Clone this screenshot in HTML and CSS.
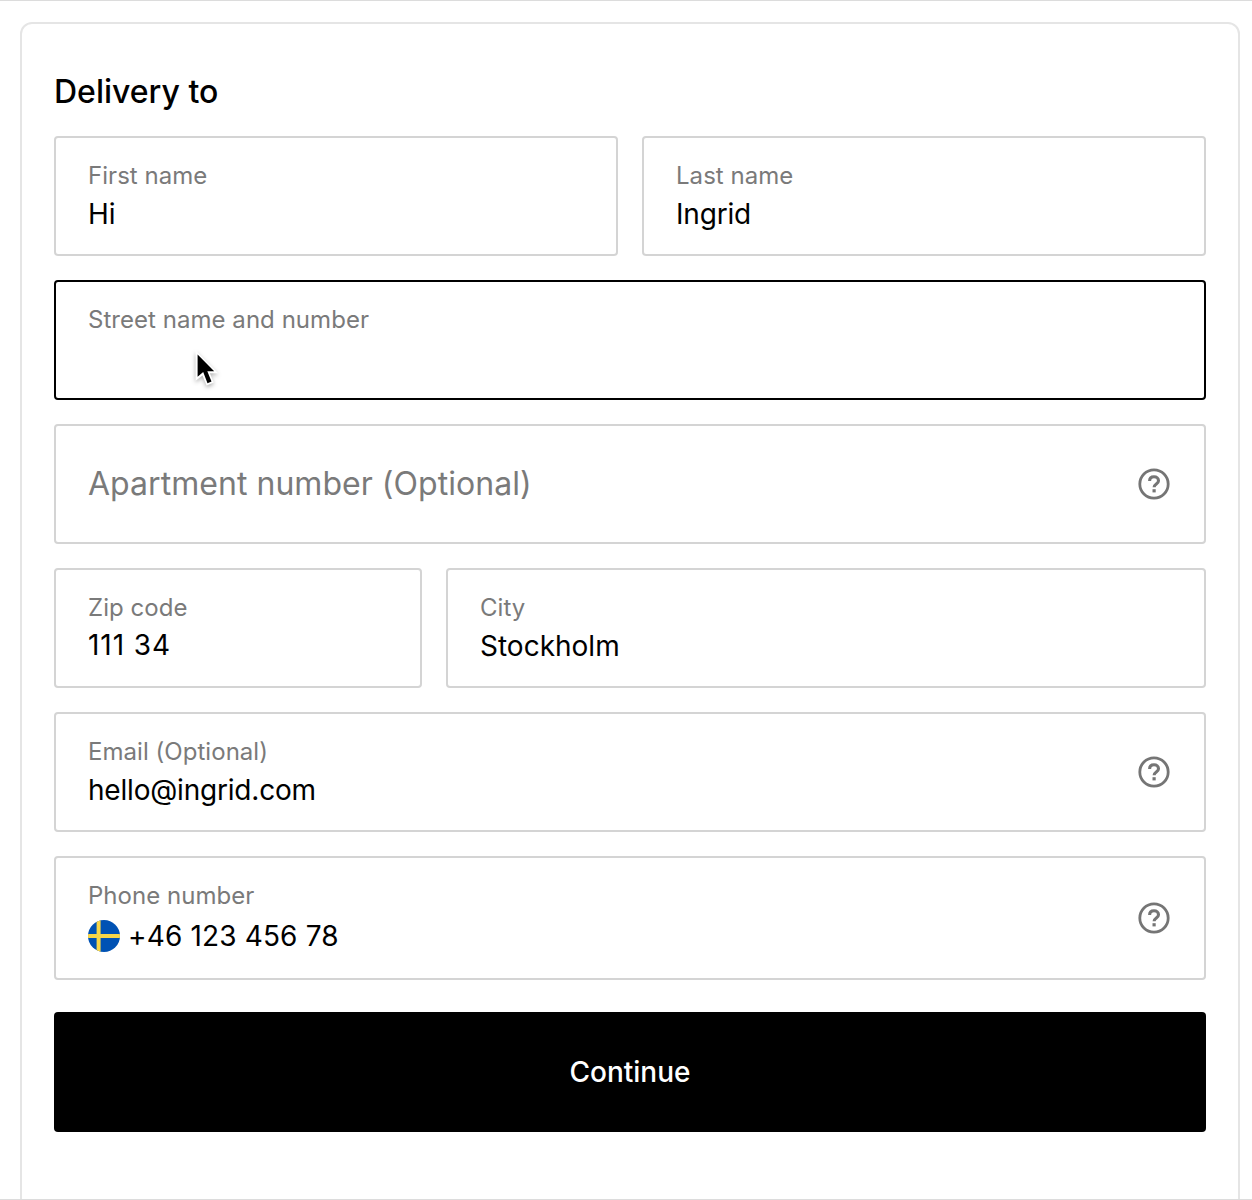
FILE: index.html
```html
<!DOCTYPE html>
<html lang="en">
<head>
  <meta charset="UTF-8">
  <title>Delivery to</title>
  <link rel="stylesheet" href="styles.css">
</head>
<body>

  <svg class="sprite" aria-hidden="true">
    <symbol id="icon-help" viewBox="0 0 32 32">
      <circle cx="16" cy="16" r="14.2" fill="none" stroke="currentColor" stroke-width="2.8"/>
      <path d="M11.6 13c0-2.7 1.8-4.3 4.4-4.3s4.5 1.6 4.5 4c0 3.3-4.4 3.2-4.4 6.6" fill="none" stroke="currentColor" stroke-width="3.1"/>
      <path d="M14.5 21.2h3.2v3.2h-3.2z" fill="currentColor"/>
    </symbol>
  </svg>

  <main class="page">
    <form class="card">
      <h1 class="title">Delivery to</h1>

      <div class="fields">
        <div class="row row-half">
          <label class="field">
            <span class="label">First name</span>
            <input class="value" type="text" value="Hi">
          </label>
          <label class="field">
            <span class="label">Last name</span>
            <input class="value value-tight" type="text" value="Ingrid">
          </label>
        </div>

        <label class="field active">
          <span class="label">Street name and number</span>
          <input class="value" type="text">
          <svg class="cursor" viewBox="0 0 28 40">
            <path d="M5.6 2.4v30.4l6.9-5.4 4.1 10.2 7.2-3.2-4-9.2h8.4z" fill="#fff"/>
            <path d="M7.6 6.6v22.2l5.6-4.8 4.3 11.2 4-1.8-4.2-10.2h6.9z" fill="#000"/>
          </svg>
        </label>

        <label class="field with-help">
          <span class="placeholder">Apartment number (Optional)</span>
          <svg class="help"><use href="#icon-help"/></svg>
        </label>

        <div class="row row-city">
          <label class="field">
            <span class="label">Zip code</span>
            <input class="value value-zip" type="text" value="111 34">
          </label>
          <label class="field">
            <span class="label">City</span>
            <input class="value" type="text" value="Stockholm">
          </label>
        </div>

        <label class="field with-help">
          <span class="stack">
            <span class="label">Email (Optional)</span>
            <input class="value value-tight" type="text" value="hello@ingrid.com">
          </span>
          <svg class="help"><use href="#icon-help"/></svg>
        </label>

        <label class="field with-help field-phone">
          <span class="stack">
            <span class="label">Phone number</span>
            <span class="phone">
              <svg class="flag" viewBox="0 0 32 32">
                <clipPath id="round"><circle cx="16" cy="16" r="16"/></clipPath>
                <g clip-path="url(#round)">
                  <path d="M0 0h32v32H0z" fill="#0052b4"/>
                  <path d="M8.6 0h4v32h-4zM0 14h32v4H0z" fill="#f8d648"/>
                </g>
              </svg>
              <input class="value" type="text" value="+46 123 456 78">
            </span>
          </span>
          <svg class="help"><use href="#icon-help"/></svg>
        </label>
      </div>

      <button class="continue" type="button">Continue</button>
    </form>
  </main>

</body>
</html>
```

FILE: styles.css
```css
* {
  box-sizing: border-box;
}

body {
  margin: 0;
  background: #fff;
  color: #000;
  font-family: Inter, "Liberation Sans", sans-serif;
}

.sprite {
  display: none;
}

.page {
  height: 1200px;
  padding: 21px 12px 0 20px;
  border-top: 1px solid #dcdcdc;
  border-bottom: 1px solid #dcdcdc;
  overflow: hidden;
}

.card {
  height: 1240px;
  padding: 48px 32px 32px;
  border: 2px solid #e5e5e5;
  border-radius: 12px;
}

.title {
  margin: 0 0 24px;
  font-size: 32px;
  line-height: 40px;
  font-weight: 500;
}

.fields,
.stack {
  display: flex;
  flex-direction: column;
}

.fields {
  gap: 24px;
}

.stack {
  flex: 1;
  align-self: flex-start;
}

.row {
  display: grid;
  gap: 24px;
}

.row-half {
  grid-template-columns: 1fr 1fr;
}

.row-city {
  grid-template-columns: 368px 1fr;
}

.field {
  display: flex;
  flex-direction: column;
  position: relative;
  height: 120px;
  padding: 22px 32px;
  border: 2px solid #d4d4d4;
  border-radius: 4px;
}

.field.active {
  border-color: #000;
}

.field.with-help {
  flex-direction: row;
  align-items: center;
  padding-right: 34px;
}

.field.field-phone {
  height: 124px;
}

.label {
  color: #7a7a7a;
  font-size: 24px;
  line-height: 32px;
  letter-spacing: 0.04px;
}

.value {
  width: 100%;
  height: 36px;
  margin: 4px 0 0;
  padding: 0;
  border: none;
  outline: none;
  background: none;
  color: #000;
  font-family: inherit;
  font-size: 28px;
}

.value-tight {
  letter-spacing: -0.2px;
}

.value-zip {
  margin-top: 3px;
  letter-spacing: 0.95px;
}

.placeholder {
  flex: 1;
  color: #7a7a7a;
  font-size: 32px;
  line-height: 40px;
  letter-spacing: 0.04px;
}

.help {
  width: 32px;
  height: 32px;
  color: #757575;
}

.phone {
  display: flex;
  align-items: center;
  gap: 8px;
  margin-top: 6px;
}

.phone .value {
  margin: 0;
  letter-spacing: 0.15px;
}

.flag {
  flex: none;
  width: 32px;
  height: 32px;
}

/* mouse pointer over the street field */
.cursor {
  position: absolute;
  left: 134px;
  top: 66px;
  width: 28px;
  height: 40px;
  filter: drop-shadow(0 2px 2px rgba(0, 0, 0, 0.3));
}

.continue {
  display: block;
  width: 100%;
  height: 120px;
  margin-top: 32px;
  border: none;
  border-radius: 4px;
  background: #000;
  color: #fff;
  font-family: inherit;
  font-size: 28px;
  font-weight: 500;
}
```
